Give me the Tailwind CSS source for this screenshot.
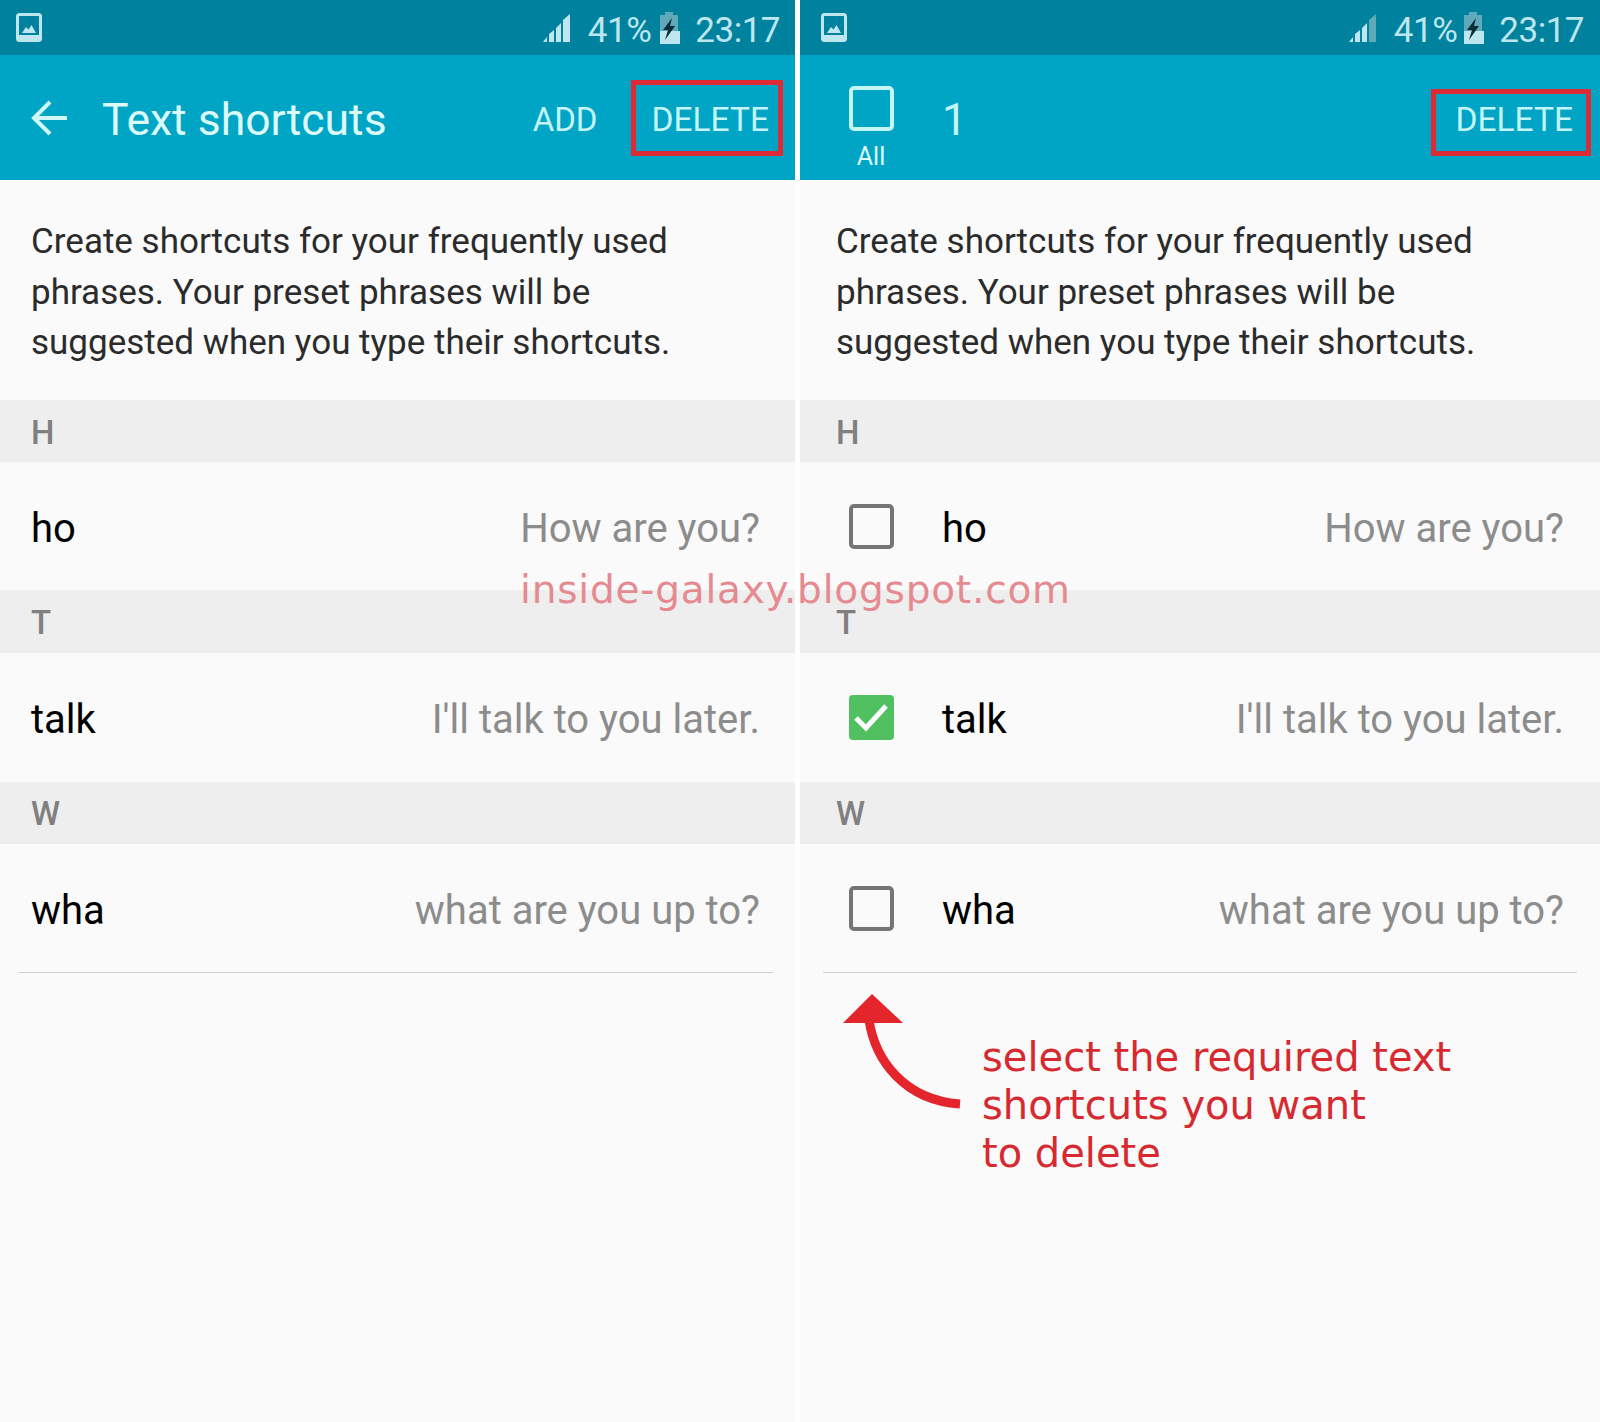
<!DOCTYPE html>
<html lang="en">
<head>
  <meta charset="UTF-8">
  <title>Text shortcuts</title>
  <script src="https://cdn.jsdelivr.net/npm/@tailwindcss/browser@4"></script>
</head>
<body class="bg-white font-['Roboto',sans-serif]">
  <div class="relative w-[1600px] h-[1422px] overflow-hidden flex justify-between">

    <!-- Left screen -->
    <div class="w-[795px] h-full bg-[#fafafa] flex flex-col">
      <div class="h-[55px] bg-[#00829f] flex items-center pl-[16px] pr-[15px] text-[#bde6ee] text-[35px] tracking-[-0.5px]">
        <svg width="26" height="29" viewBox="0 0 26 29" class="shrink-0"><rect x="1.5" y="1.5" width="23" height="26" rx="2" fill="none" stroke="#bde6ee" stroke-width="3"/><rect x="3" y="22" width="20" height="5" fill="#bde6ee"/><path d="M6 20l4-6 2.500 2.500 3-4.500 4.500 8z" fill="#bde6ee"/></svg>
        <svg width="30" height="30" viewBox="0 0 30 30" class="ml-auto shrink-0"><path d="M1 29l4-5v5zM7 29v-8l5-4v12zM14 29V15l5-5v19zM21 29V7l7-6v28z" fill="#bde6ee"/></svg>
        <span class="ml-[16px] pt-[6px] leading-none">41%</span>
        <svg width="22" height="32" viewBox="0 0 22 32" class="ml-[7px] shrink-0"><path d="M7 0h8v3h5v29H2V3h5z" fill="#5fa9bb"/><path d="M2 19h20v13H2z" fill="#bde6ee"/><path d="M14 6l-9 12h5l-3 10 10-14h-5z" fill="#0c2d36"/></svg>
        <span class="ml-[15px] pt-[6px] leading-none">23:17</span>
      </div>
      <div class="h-[125px] bg-[#00a5c6] flex items-center pl-[31px] text-[#c4f5f7]">
        <svg width="38" height="38" viewBox="0 0 38 38" class="shrink-0"><path d="M36 19H4M19 3L3 19l16 16" fill="none" stroke="#cff8f9" stroke-width="4"/></svg>
        <span class="ml-[33px] pt-[6px] text-[44.5px] leading-none text-[#dcfafa]">Text shortcuts</span>
        <span class="ml-auto pt-[4px] text-[33px] leading-none">ADD</span>
        <span class="ml-[54px] mr-[26px] pt-[4px] text-[33.5px] leading-none">DELETE</span>
      </div>
      <p class="h-[220px] pt-[37px] pl-[31px] text-[35px] leading-[50.5px] text-[#2b2b2b]">Create shortcuts for your frequently used<br>phrases. Your preset phrases will be<br>suggested when you type their shortcuts.</p>
      <div class="h-[62px] bg-[#eeeeee] flex items-center pl-[31px] pt-[4px] text-[33px] font-medium text-[#808080]">H</div>
      <div class="h-[128px] flex items-center justify-between pl-[31px] pr-[35px]">
        <span class="pt-[6px] text-[40px] text-black">ho</span><span class="pt-[6px] text-[40px] text-[#8c8c8c]">How are you?</span>
      </div>
      <div class="h-[63px] bg-[#eeeeee] flex items-center pl-[31px] pt-[2px] text-[33px] font-medium text-[#808080]">T</div>
      <div class="h-[129px] flex items-center justify-between pl-[31px] pr-[35px]">
        <span class="pt-[4px] text-[40px] text-black">talk</span><span class="pt-[4px] text-[40px] text-[#8c8c8c]">I'll talk to you later.</span>
      </div>
      <div class="h-[62px] bg-[#eeeeee] flex items-center pl-[31px] pt-[2px] text-[33px] font-medium text-[#808080]">W</div>
      <div class="h-[128px] flex items-center justify-between pl-[31px] pr-[35px]">
        <span class="pt-[6px] text-[40px] text-black">wha</span><span class="pt-[6px] text-[40px] text-[#8c8c8c]">what are you up to?</span>
      </div>
      <div class="h-px bg-[#cfcfcf] ml-[18px] mr-[22px]"></div>
    </div>

    <!-- Right screen -->
    <div class="w-[800px] h-full bg-[#fafafa] flex flex-col">
      <div class="h-[55px] bg-[#00829f] flex items-center pl-[21px] pr-[16px] text-[#bde6ee] text-[35px] tracking-[-0.5px]">
        <svg width="26" height="29" viewBox="0 0 26 29" class="shrink-0"><rect x="1.5" y="1.5" width="23" height="26" rx="2" fill="none" stroke="#bde6ee" stroke-width="3"/><rect x="3" y="22" width="20" height="5" fill="#bde6ee"/><path d="M6 20l4-6 2.500 2.500 3-4.500 4.500 8z" fill="#bde6ee"/></svg>
        <svg width="30" height="30" viewBox="0 0 30 30" class="ml-auto shrink-0"><path d="M1 29l4-5v5zM7 29v-8l5-4v12zM14 29V15l5-5v19z" fill="#bde6ee"/><path d="M21 29V7l7-6v28z" fill="#5fa9bb"/></svg>
        <span class="ml-[16px] pt-[6px] leading-none">41%</span>
        <svg width="22" height="32" viewBox="0 0 22 32" class="ml-[5px] shrink-0"><path d="M7 0h8v3h5v29H2V3h5z" fill="#5fa9bb"/><path d="M2 19h20v13H2z" fill="#bde6ee"/><path d="M14 6l-9 12h5l-3 10 10-14h-5z" fill="#0c2d36"/></svg>
        <span class="ml-[15px] pt-[6px] leading-none">23:17</span>
      </div>
      <div class="h-[125px] bg-[#00a5c6] flex items-center text-[#c4f5f7]">
        <div class="w-[142px] flex flex-col items-center pt-[20px]">
          <div class="w-[45px] h-[45px] border-[4px] border-[#c4f5f7] rounded-[5px]"></div>
          <span class="mt-[13px] text-[25px] leading-none text-[#dcfafa]">All</span>
        </div>
        <span class="pt-[6px] text-[44.5px] leading-none">1</span>
        <span class="ml-auto mr-[27px] pt-[4px] text-[33.5px] leading-none">DELETE</span>
      </div>
      <p class="h-[220px] pt-[37px] pl-[36px] text-[35px] leading-[50.5px] text-[#2b2b2b]">Create shortcuts for your frequently used<br>phrases. Your preset phrases will be<br>suggested when you type their shortcuts.</p>
      <div class="h-[62px] bg-[#eeeeee] flex items-center pl-[36px] pt-[4px] text-[33px] font-medium text-[#808080]">H</div>
      <div class="h-[128px] flex items-center pl-[49px] pr-[36px]">
        <div class="w-[45px] h-[45px] border-[4px] border-[#757575] rounded-[5px]"></div>
        <span class="ml-[48px] pt-[6px] text-[40px] text-black">ho</span><span class="ml-auto pt-[6px] text-[40px] text-[#8c8c8c]">How are you?</span>
      </div>
      <div class="h-[63px] bg-[#eeeeee] flex items-center pl-[36px] pt-[2px] text-[33px] font-medium text-[#808080]">T</div>
      <div class="h-[129px] flex items-center pl-[49px] pr-[36px]">
        <svg width="45" height="45" viewBox="0 0 45 45" class="shrink-0"><rect width="45" height="45" rx="4" fill="#50c060"/><path d="M7 23l10 10 20-22" fill="none" stroke="#fff" stroke-width="5"/></svg>
        <span class="ml-[48px] pt-[4px] text-[40px] text-black">talk</span><span class="ml-auto pt-[4px] text-[40px] text-[#8c8c8c]">I'll talk to you later.</span>
      </div>
      <div class="h-[62px] bg-[#eeeeee] flex items-center pl-[36px] pt-[2px] text-[33px] font-medium text-[#808080]">W</div>
      <div class="h-[128px] flex items-center pl-[49px] pr-[36px]">
        <div class="w-[45px] h-[45px] border-[4px] border-[#757575] rounded-[5px]"></div>
        <span class="ml-[48px] pt-[6px] text-[40px] text-black">wha</span><span class="ml-auto pt-[6px] text-[40px] text-[#8c8c8c]">what are you up to?</span>
      </div>
      <div class="h-px bg-[#cfcfcf] ml-[23px] mr-[23px]"></div>
    </div>

    <!-- Annotations drawn over the screenshots -->
    <div class="absolute left-[631px] top-[80px] w-[152px] h-[76px] border-[5px] border-[#dd2a35]"></div>
    <div class="absolute left-[1431px] top-[89px] w-[160px] h-[67px] border-[5px] border-[#dd2a35]"></div>
    <div class="absolute left-[520px] top-[565px] font-['DejaVu_Sans',sans-serif] text-[39px] tracking-[0.8px] leading-[50px] text-[#e58a90] whitespace-nowrap">inside-galaxy.blogspot.com</div>
    <svg class="absolute left-[840px] top-[990px]" width="125" height="125" viewBox="0 0 125 125"><path d="M3 33L32 4l31 29z" fill="#e4252b"/><path d="M29 30c6 40 35 80 91 84" fill="none" stroke="#e4252b" stroke-width="9"/></svg>
    <div class="absolute left-[982px] top-[1033px] font-['DejaVu_Sans',sans-serif] text-[40px] leading-[48px] text-[#d62a30] whitespace-nowrap">select the required text<br>shortcuts you want<br>to delete</div>
  </div>
</body>
</html>
